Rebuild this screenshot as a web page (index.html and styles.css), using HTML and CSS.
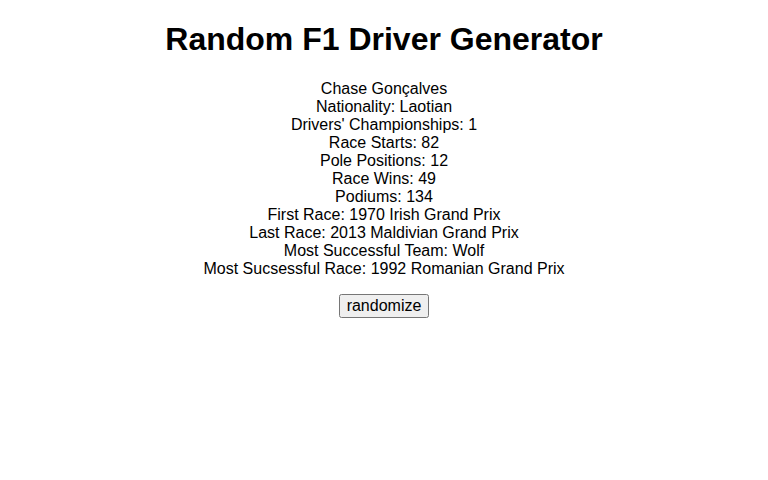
FILE: index.html
```html
<!DOCTYPE html>
<html lang="en">
<head>
  <meta charset="UTF-8">
  <meta name="viewport" content="width=device-width, initial-scale=1.0">
  <title>Random F1 Driver Generator</title>
  <link rel="stylesheet" href="styles.css">
</head>
<body>
  <h1>Random F1 Driver Generator</h1>

  <div class="driver">
    <div>Chase Gonçalves</div>
    <div>Nationality: Laotian</div>
    <div>Drivers' Championships: 1</div>
    <div>Race Starts: 82</div>
    <div>Pole Positions: 12</div>
    <div>Race Wins: 49</div>
    <div>Podiums: 134</div>
    <div>First Race: 1970 Irish Grand Prix</div>
    <div>Last Race: 2013 Maldivian Grand Prix</div>
    <div>Most Successful Team: Wolf</div>
    <div>Most Sucsessful Race: 1992 Romanian Grand Prix</div>
  </div>

  <button class="randomize">randomize</button>
</body>
</html>
```

FILE: styles.css
```css
body {
  font-family: "Liberation Sans", Arial, sans-serif;
  margin: 0;
  text-align: center;
  color: #000;
  background-color: #fff;
}
h1 {
  font-size: 32px;
  margin: 21px 0 22px;
}
.driver {
  font-size: 16px;
  line-height: 18px;
}
.randomize {
  font-family: "Liberation Sans", Arial, sans-serif;
  font-size: 16px;
  margin-top: 16px;
}
```
